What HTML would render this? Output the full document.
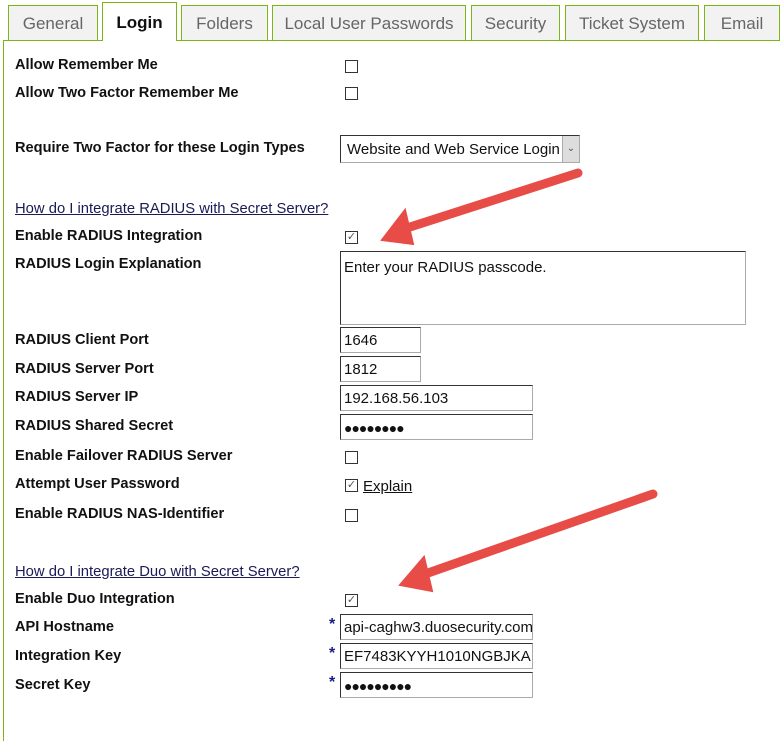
<!DOCTYPE html>
<html><head><style>
body{margin:0;width:780px;height:706px;background:#fff;font-family:"Liberation Sans",sans-serif;position:relative;overflow:hidden}
.tab{position:absolute;top:5px;height:35px;border:1px solid #7cb518;border-bottom:none;background:#f2f2f2;color:#666;font-size:17px;line-height:35px;text-align:center;box-sizing:border-box}
.tab.a{background:#fff;color:#111;font-weight:bold;top:2px;height:39px;line-height:40px}
.panel{position:absolute;left:3px;top:40px;width:800px;height:700px;border-left:1px solid #7cb518;border-top:1px solid #7cb518}
.l{position:absolute;left:15px;font-size:14.6px;font-weight:bold;color:#111;margin-top:1px}
.lk{position:absolute;left:15px;font-size:14.8px;color:#1a1a55;text-decoration:underline;margin-top:1px}
.cb{position:absolute;left:345px;width:11px;height:11px;border:1px solid #333;font-size:11px;line-height:11px;text-align:center;color:#555}
.in{position:absolute;left:340px;height:26px;border:1px solid #333;border-bottom-color:#aaa;border-right-color:#aaa;box-sizing:border-box;font-size:15px;line-height:26px;padding-left:3px;color:#111;white-space:nowrap;overflow:hidden}
.st{position:absolute;left:329px;color:#1a1a8a;font-weight:bold;font-size:16px}
</style></head><body>
<div class="panel"></div>
<div class="tab" style="left:8px;width:90px">General</div>
<div class="tab a" style="left:102px;width:75px">Login</div>
<div class="tab" style="left:181px;width:87px">Folders</div>
<div class="tab" style="left:272px;width:194px">Local User Passwords</div>
<div class="tab" style="left:471px;width:89px">Security</div>
<div class="tab" style="left:565px;width:134px">Ticket System</div>
<div class="tab" style="left:704px;width:76px">Email</div>

<div class="l" style="top:56px">Allow Remember Me</div><div class="cb" style="top:60px"></div>
<div class="l" style="top:84px">Allow Two Factor Remember Me</div><div class="cb" style="top:87px"></div>
<div class="l" style="top:139px">Require Two Factor for these Login Types</div>
<div class="in" style="top:135px;width:240px;height:28px;line-height:28px;font-size:15px;padding-left:6px">Website and Web Service Login<span style="position:absolute;right:0;top:0;width:16px;height:26px;background:#ddd;border-left:1px solid #aaa;font-size:10px;line-height:26px;text-align:center;color:#555">&#8964;</span></div>
<div class="lk" style="top:200px">How do I integrate RADIUS with Secret Server?</div>
<div class="l" style="top:227px">Enable RADIUS Integration</div><div class="cb" style="top:231px">✓</div>
<div class="l" style="top:255px">RADIUS Login Explanation</div>
<div class="in" style="top:251px;width:406px;height:74px;line-height:32px">Enter your RADIUS passcode.</div>
<div class="l" style="top:331px">RADIUS Client Port</div><div class="in" style="top:327px;width:81px">1646</div>
<div class="l" style="top:360px">RADIUS Server Port</div><div class="in" style="top:356px;width:81px">1812</div>
<div class="l" style="top:388px">RADIUS Server IP</div><div class="in" style="top:385px;width:193px">192.168.56.103</div>
<div class="l" style="top:417px">RADIUS Shared Secret</div><div class="in" style="top:414px;width:193px;font-size:14px;letter-spacing:-1px">●●●●●●●●</div>
<div class="l" style="top:447px">Enable Failover RADIUS Server</div><div class="cb" style="top:451px"></div>
<div class="l" style="top:475px">Attempt User Password</div><div class="cb" style="top:479px">✓</div>
<div style="position:absolute;left:363px;top:478px;font-size:15px;text-decoration:underline;color:#111">Explain</div>
<div class="l" style="top:505px">Enable RADIUS NAS-Identifier</div><div class="cb" style="top:509px"></div>
<div class="lk" style="top:563px">How do I integrate Duo with Secret Server?</div>
<div class="l" style="top:590px">Enable Duo Integration</div><div class="cb" style="top:594px">✓</div>
<div class="l" style="top:618px">API Hostname</div><span class="st" style="top:616px">*</span><div class="in" style="top:614px;width:193px">api-caghw3.duosecurity.com</div>
<div class="l" style="top:647px">Integration Key</div><span class="st" style="top:645px">*</span><div class="in" style="top:643px;width:193px">EF7483KYYH1010NGBJKA</div>
<div class="l" style="top:676px">Secret Key</div><span class="st" style="top:674px">*</span><div class="in" style="top:672px;width:193px;font-size:14px;letter-spacing:-1px">●●●●●●●●●</div>

<svg width="780" height="706" style="position:absolute;left:0;top:0" >
<g fill="#e74c47" stroke="#e74c47" stroke-linecap="round">
<line x1="578" y1="173" x2="410" y2="227" stroke-width="9"/>
<polygon points="382,240 405,210 413,244" stroke-width="2"/>
<line x1="653" y1="494" x2="428" y2="573" stroke-width="9"/>
<polygon points="400,585 424,557 432,591" stroke-width="2"/>
</g></svg>
</body></html>
